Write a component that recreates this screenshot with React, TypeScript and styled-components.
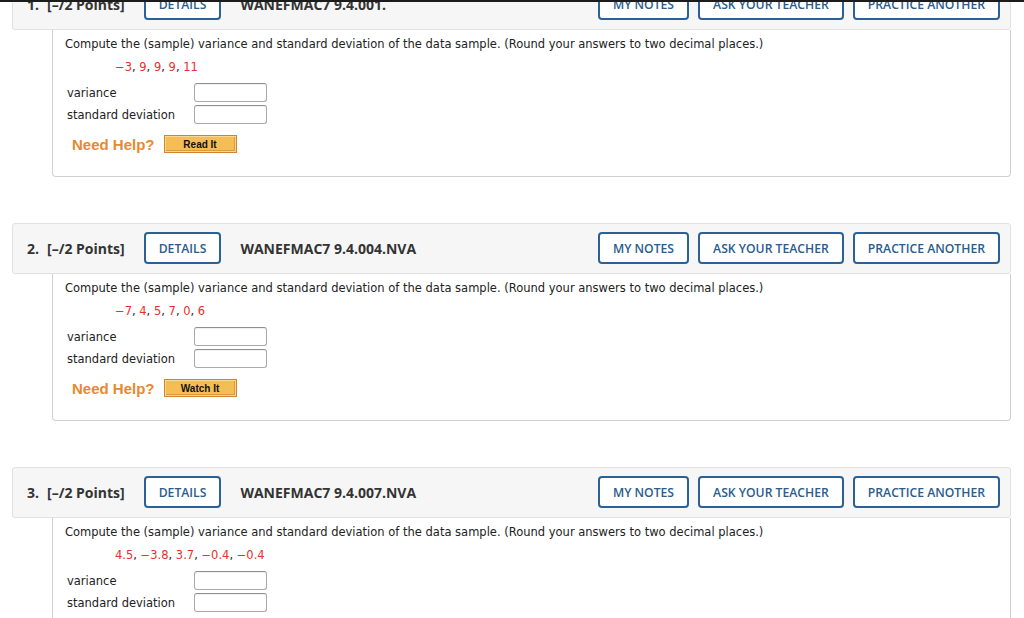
import React from 'react';
import styled, { createGlobalStyle } from 'styled-components';

const GlobalStyle = createGlobalStyle`
  html, body {
    margin: 0;
    padding: 0;
    background: #ffffff;
    overflow: hidden;
  }
  * {
    box-sizing: border-box;
  }
`;

const WindowEdge = styled.div`
  position: fixed;
  top: 0;
  left: 0;
  right: 0;
  height: 2px;
  background: #1c1c1c;
  z-index: 10;
`;

const Page = styled.div`
  width: 1024px;
  height: 618px;
  overflow: hidden;
`;

// the page is scrolled a little, so question 1 starts above the top edge
const Scroller = styled.div`
  margin-top: -21px;
`;

const Question = styled.section`
  margin-bottom: 46px;
`;

const Header = styled.div`
  display: flex;
  align-items: center;
  height: 51px;
  margin: 0 13px 0 12px;
  padding: 0 10px 1px 14px;
  background: #f6f6f6;
  border: 1px solid #e1e1e1;
  border-radius: 3px;
  font-family: 'Open Sans', 'DejaVu Sans', sans-serif;
`;

const Number = styled.span`
  font-size: 14px;
  font-weight: 700;
  color: #333333;
  margin-right: 8px;
`;

const Points = styled.span`
  font-size: 14px;
  font-weight: 700;
  color: #333333;
  margin-right: 19px;
`;

const Code = styled.span`
  font-size: 14px;
  font-weight: 700;
  color: #333333;
  margin-left: 19px;
`;

const Actions = styled.div`
  display: flex;
  gap: 9px;
  margin-left: auto;
`;

const OutlineButton = styled.button`
  height: 32px;
  padding: 0 13px;
  background: #ffffff;
  border: 2px solid #2c6196;
  border-radius: 4px;
  font-family: 'Open Sans', 'DejaVu Sans', sans-serif;
  font-size: 12.2px;
  font-weight: 600;
  color: #2a5c8c;
  white-space: nowrap;
  cursor: pointer;
`;

const Body = styled.div`
  height: 147px;
  margin: 0 13px 0 52px;
  padding: 6px 0 0 12px;
  border: 1px solid #d0d0d0;
  border-top: none;
  border-radius: 0 0 4px 4px;
  font-family: 'DejaVu Sans', Verdana, sans-serif;
  font-size: 11.5px;
  color: #222222;
`;

const Prompt = styled.p`
  margin: 0;
  line-height: 16px;
`;

const Data = styled.p`
  margin: 7px 0 0 50px;
  line-height: 16px;
  color: #222222;
`;

const Value = styled.span`
  color: #e8302a;
`;

const Answers = styled.div`
  display: grid;
  grid-template-columns: 127px 73px;
  row-gap: 3px;
  align-items: center;
  margin: 8px 0 0 2px;
`;

const Label = styled.span`
  line-height: 16px;
`;

const AnswerBox = styled.input`
  width: 73px;
  height: 19px;
  border: 1px solid #a9a9a9;
  border-top-color: #8f8f8f;
  border-radius: 3px;
  background: #ffffff;
  box-shadow: inset 0 1px 1px rgba(0, 0, 0, 0.06);
`;

const Help = styled.div`
  display: flex;
  align-items: center;
  gap: 9px;
  margin: 11px 0 0 7px;
`;

const HelpText = styled.span`
  font-family: 'Liberation Sans', Arial, sans-serif;
  font-size: 15px;
  font-weight: 700;
  color: #e8892f;
`;

const HelpButton = styled.button`
  width: 73px;
  height: 18px;
  padding: 0;
  background: #f4be55;
  border: 1px solid #d4822c;
  box-shadow: inset 0 0 0 1px #f8d98f, inset -1px -1px 0 1px #dc9a3c;
  font-family: 'Liberation Sans', Arial, sans-serif;
  font-size: 10px;
  font-weight: 700;
  color: #111111;
  cursor: pointer;
`;

type Item = {
  no: number;
  code: string;
  values: string[];
  help?: string;
};

const items: Item[] = [
  { no: 1, code: 'WANEFMAC7 9.4.001.', values: ['\u22123', '9', '9', '9', '11'], help: 'Read It' },
  { no: 2, code: 'WANEFMAC7 9.4.004.NVA', values: ['\u22127', '4', '5', '7', '0', '6'], help: 'Watch It' },
  { no: 3, code: 'WANEFMAC7 9.4.007.NVA', values: ['4.5', '\u22123.8', '3.7', '\u22120.4', '\u22120.4'] },
];

const QuestionBlock: React.FC<{ item: Item }> = ({ item }) => (
  <Question>
    <Header>
      <Number>{item.no}.</Number>
      <Points>[–/2 Points]</Points>
      <OutlineButton>DETAILS</OutlineButton>
      <Code>{item.code}</Code>
      <Actions>
        <OutlineButton>MY NOTES</OutlineButton>
        <OutlineButton>ASK YOUR TEACHER</OutlineButton>
        <OutlineButton>PRACTICE ANOTHER</OutlineButton>
      </Actions>
    </Header>
    <Body>
      <Prompt>
        Compute the (sample) variance and standard deviation of the data sample. (Round your answers to two decimal places.)
      </Prompt>
      <Data>
        {item.values.map((v, i) => (
          <React.Fragment key={i}>
            {i > 0 && ', '}
            <Value>{v}</Value>
          </React.Fragment>
        ))}
      </Data>
      <Answers>
        <Label>variance</Label>
        <AnswerBox />
        <Label>standard deviation</Label>
        <AnswerBox />
      </Answers>
      {item.help && (
        <Help>
          <HelpText>Need Help?</HelpText>
          <HelpButton>{item.help}</HelpButton>
        </Help>
      )}
    </Body>
  </Question>
);

export default function App() {
  return (
    <Page>
      <GlobalStyle />
      <WindowEdge />
      <Scroller>
        {items.map(item => (
          <QuestionBlock key={item.no} item={item} />
        ))}
      </Scroller>
    </Page>
  );
}
